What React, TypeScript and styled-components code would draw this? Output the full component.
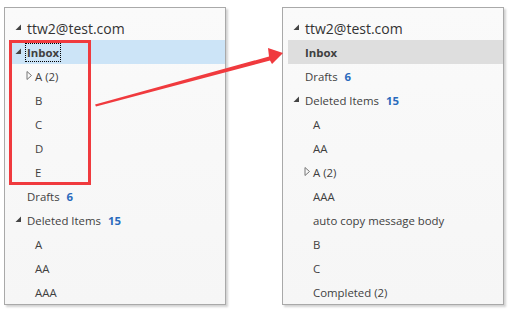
import React from "react";
import styled, { createGlobalStyle } from "styled-components";

const Global = createGlobalStyle`
  html, body { margin: 0; padding: 0; background: #ffffff; }
  body { font-family: "Open Sans", "Noto Sans", sans-serif; }
`;

const Stage = styled.div`
  position: relative;
  width: 514px;
  height: 315px;
  display: flex;
  align-items: flex-start;
  gap: 56px;
  padding: 7px 0 0 4px;
  box-sizing: border-box;
  background: #fff;
`;

const Panel = styled.div`
  width: 222px;
  height: 298px;
  box-sizing: border-box;
  border: 1px solid #a9a9a9;
  background: linear-gradient(#fafafa, #f6f6f6);
  box-shadow: 2px 2px 2px rgba(0, 0, 0, 0.18);
  padding-top: 8px;
  overflow: hidden;
`;

const Row = styled.div<{ $indent: number; $sel?: "blue" | "gray"; $header?: boolean }>`
  position: relative;
  height: 24px;
  display: flex;
  align-items: center;
  margin-left: 5px;
  padding-left: ${(p) => p.$indent - 5}px;
  background: ${(p) =>
    p.$sel === "blue" ? "#cce4f7" : p.$sel === "gray" ? "#dedede" : "transparent"};
  font-size: ${(p) => (p.$header ? "14px" : "11.4px")};
  color: ${(p) => (p.$header ? "#333" : "#3f3f3f")};
  white-space: nowrap;
`;

const Expander = styled.span`
  position: absolute;
  left: ${(p: { $at: number }) => p.$at}px;
  top: 50%;
  width: 7px;
  height: 7px;
  margin-top: -4px;
  display: flex;
`;

const Label = styled.span<{ $bold?: boolean; $focus?: boolean }>`
  font-weight: ${(p) => (p.$bold ? 700 : 400)};
  outline: ${(p) => (p.$focus ? "1px dotted #000" : "none")};
  outline-offset: 0px;
  padding: ${(p) => (p.$focus ? "1px 1px" : "0")};
  margin-left: ${(p) => (p.$focus ? "-1px" : "0")};
`;

const Count = styled.span`
  margin-left: 7px;
  font-weight: 700;
  color: #2a6bbd;
`;

const RedBox = styled.div`
  position: absolute;
  left: 9px;
  top: 40px;
  width: 82px;
  height: 145px;
  box-sizing: border-box;
  border: 3px solid #f03a3e;
`;

const ArrowSvg = styled.svg`
  position: absolute;
  left: 0;
  top: 0;
  pointer-events: none;
`;

type Item = {
  label: string;
  level: 0 | 1 | 2;
  exp?: "open" | "closed";
  count?: string;
  bold?: boolean;
  sel?: "blue" | "gray";
  focus?: boolean;
};

const leftItems: Item[] = [
  { label: "ttw2@test.com", level: 0, exp: "open" },
  { label: "Inbox", level: 1, exp: "open", bold: true, sel: "blue", focus: true },
  { label: "A (2)", level: 2, exp: "closed" },
  { label: "B", level: 2 },
  { label: "C", level: 2 },
  { label: "D", level: 2 },
  { label: "E", level: 2 },
  { label: "Drafts", level: 1, count: "6" },
  { label: "Deleted Items", level: 1, exp: "open", count: "15" },
  { label: "A", level: 2 },
  { label: "AA", level: 2 },
  { label: "AAA", level: 2 },
];

const rightItems: Item[] = [
  { label: "ttw2@test.com", level: 0, exp: "open" },
  { label: "Inbox", level: 1, bold: true, sel: "gray" },
  { label: "Drafts", level: 1, count: "6" },
  { label: "Deleted Items", level: 1, exp: "open", count: "15" },
  { label: "A", level: 2 },
  { label: "AA", level: 2 },
  { label: "A (2)", level: 2, exp: "closed" },
  { label: "AAA", level: 2 },
  { label: "auto copy message body", level: 2 },
  { label: "B", level: 2 },
  { label: "C", level: 2 },
  { label: "Completed (2)", level: 2 },
];

const OpenTri = () => (
  <svg width="7" height="7" viewBox="0 0 7 7">
    <polygon points="6,0.5 6,6 0.5,6" fill="#444" />
  </svg>
);

const ClosedTri = () => (
  <svg width="7" height="9" viewBox="0 0 7 9" style={{ marginTop: -1 }}>
    <polygon points="1,0.5 5.5,4.5 1,8.5" fill="none" stroke="#777" strokeWidth="1" />
  </svg>
);

const Tree = ({ items }: { items: Item[] }) => (
  <Panel>
    {items.map((it, i) => {
      const indent = it.level === 2 ? 30 : 22;
      return (
        <Row key={i} $indent={indent} $sel={it.sel} $header={it.level === 0}>
          {it.exp && (
            <Expander $at={it.exp === "open" ? indent - 17 : indent - 14}>
              {it.exp === "open" ? <OpenTri /> : <ClosedTri />}
            </Expander>
          )}
          <Label $bold={it.bold} $focus={it.focus}>
            {it.label}
          </Label>
          {it.count && <Count>{it.count}</Count>}
        </Row>
      );
    })}
  </Panel>
);

export default function App() {
  return (
    <>
      <Global />
      <Stage>
        <Tree items={leftItems} />
        <Tree items={rightItems} />
        <RedBox />
        <ArrowSvg width="514" height="315" viewBox="0 0 514 315">
          <polygon
            points="95,104.5 269,56.5 268,48 283,53 272,64 270,60.5 96,106.5"
            fill="#f03a3e"
          />
        </ArrowSvg>
      </Stage>
    </>
  );
}
